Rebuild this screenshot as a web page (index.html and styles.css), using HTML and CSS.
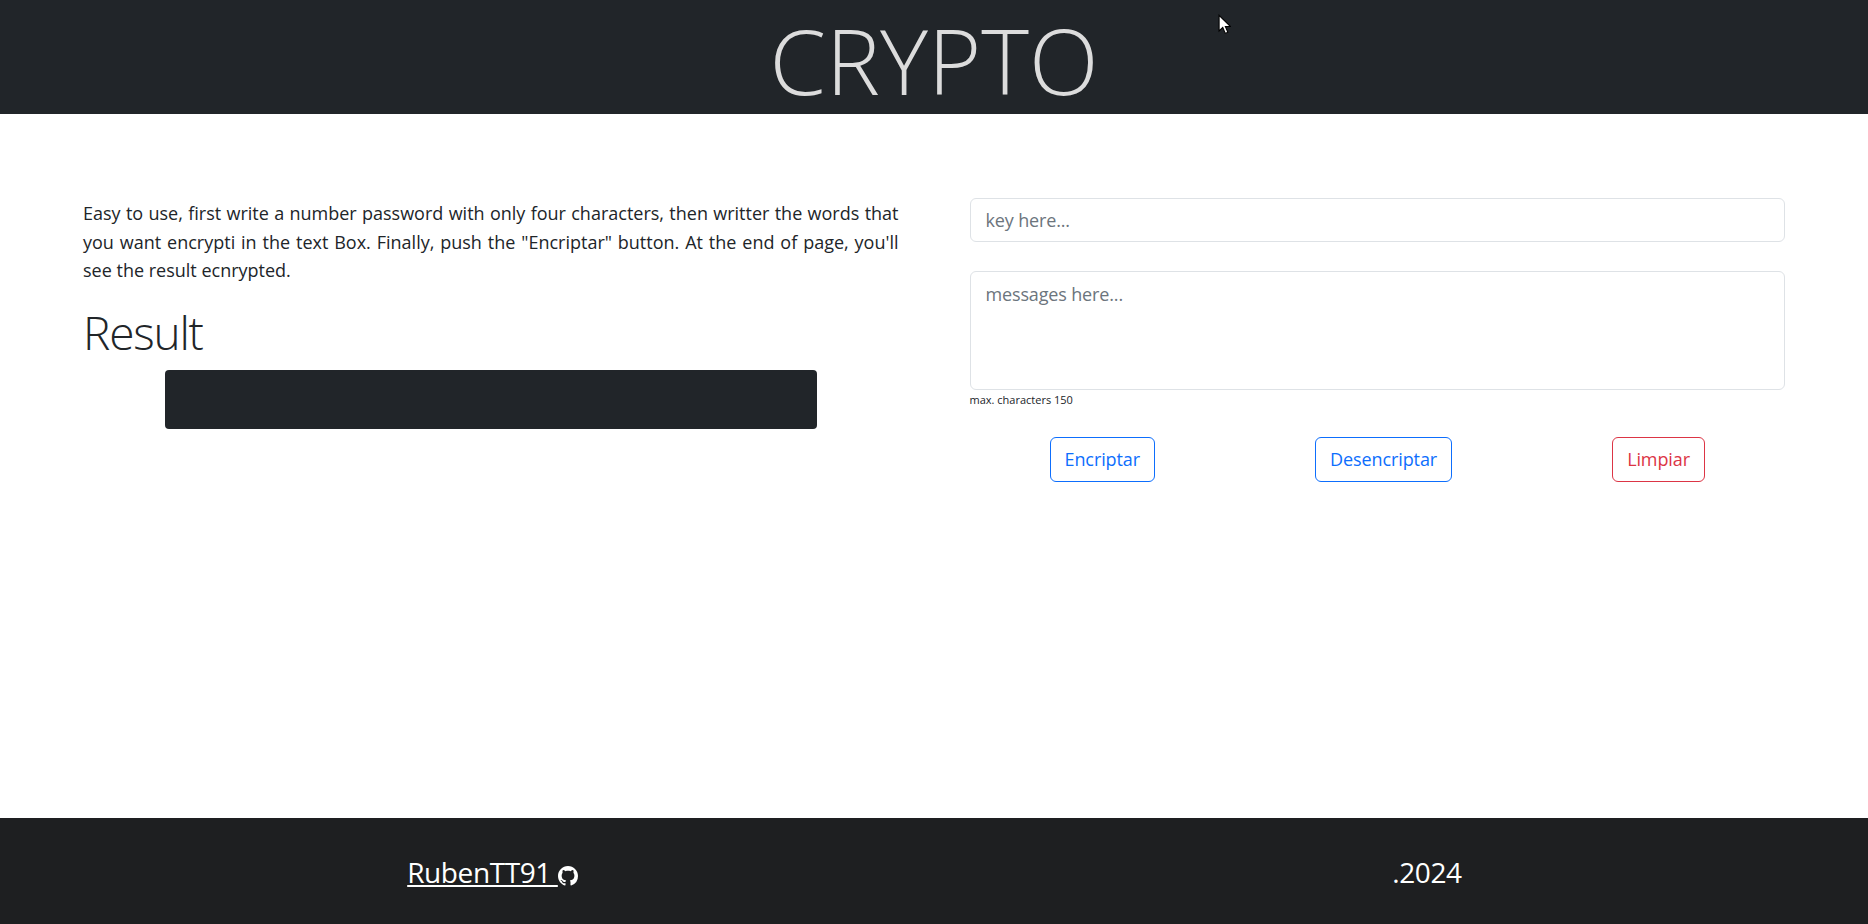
FILE: index.html
```html
<!DOCTYPE html>
<html lang="en">
<head>
<meta charset="utf-8">
<title>Crypto</title>
<link rel="stylesheet" href="styles.css">
</head>
<body>
<header class="top"><h1 class="brand">CRYPTO</h1></header>
<main class="main">
  <section class="col">
    <p class="intro">Easy to use, first write a number password with only four characters, then writter the words that you want encrypti in the text Box. Finally, push the "Encriptar" button. At the end of page, you'll see the result ecnrypted.</p>
    <h2 class="result-title">Result</h2>
    <div class="result-box"></div>
  </section>
  <section class="col">
    <input class="field" type="text" placeholder="key here...">
    <textarea class="field area" placeholder="messages here..."></textarea>
    <div class="hint">max. characters 150</div>
    <div class="actions">
      <button class="btn blue">Encriptar</button>
      <button class="btn blue">Desencriptar</button>
      <button class="btn red">Limpiar</button>
    </div>
  </section>
</main>
<footer class="foot">
  <div class="foot-cell"><a class="link" href="#">RubenTT91 <svg class="gh" viewBox="0 0 16 16" width="20" height="20" fill="currentColor"><path d="M8 0C3.58 0 0 3.58 0 8c0 3.54 2.29 6.53 5.47 7.59.4.07.55-.17.55-.38 0-.19-.01-.82-.01-1.49-2.01.37-2.53-.49-2.69-.94-.09-.23-.48-.94-.82-1.13-.28-.15-.68-.52-.01-.53.63-.01 1.08.58 1.23.82.72 1.21 1.87.87 2.33.66.07-.52.28-.87.51-1.07-1.78-.2-3.64-.89-3.64-3.95 0-.87.31-1.59.82-2.15-.08-.2-.36-1.02.08-2.12 0 0 .67-.21 2.2.82.64-.18 1.32-.27 2-.27s1.36.09 2 .27c1.53-1.04 2.2-.82 2.2-.82.44 1.1.16 1.92.08 2.12.51.56.82 1.27.82 2.15 0 3.07-1.87 3.75-3.65 3.95.29.25.54.73.54 1.48 0 1.07-.01 1.93-.01 2.2 0 .21.15.46.55.38A8.01 8.01 0 0 0 16 8c0-4.42-3.58-8-8-8z"/></svg></a></div>
  <div class="foot-cell year">.2024</div>
</footer>
<svg class="cursor" viewBox="0 0 12 19" width="13" height="21"><path d="M1 1v14.5l3.4-3.2 2.3 5.4 2.4-1-2.3-5.3h4.7z" fill="#fff" stroke="#000" stroke-width="1"/></svg>
</body>
</html>
```
FILE: styles.css
```css
* { box-sizing: border-box; }
html, body { height: 100%; }
body { margin: 0; min-height: 924px; display: flex; flex-direction: column; background: #fff; color: #212529; font-family: "Open Sans", "Noto Sans", sans-serif; font-size: 16px; line-height: 1.5; }
.top { height: 114px; background: #212529; display: flex; justify-content: center; }
.brand { margin: 0; padding-top: 6px; font-size: 91px; font-weight: 300; line-height: 108px; color: #dcdcdc; }
.main { flex: 1; display: grid; grid-template-columns: 1fr 1fr; gap: 71px; padding: 84px 83px 0; }
.intro { margin: 1px 0 18px; font-size: 18px; line-height: 28.5px; text-align: justify; }
.result-title { margin: 0 0 9px; font-size: 46px; font-weight: 300; line-height: 58px; letter-spacing: -1.2px; }
.result-box { width: 80%; height: 59px; margin: 0 auto; background: #212529; border-radius: 4px; }
.col { display: flex; flex-direction: column; }
.field { display: block; width: 100%; height: 44px; padding: 6px 15px; border: 1px solid #dee2e6; border-radius: 6px; font: inherit; font-size: 18px; letter-spacing: -0.15px; color: #212529; background: #fff; }
.field::placeholder { color: #6c757d; }
.area { height: 119px; margin-top: 29px; padding-top: 9px; resize: none; }
.hint { font-size: 11px; line-height: 18px; margin-top: 1px; }
.actions { display: flex; justify-content: space-around; margin-top: 28px; }
.btn { height: 45px; padding: 0 14px; background: #fff; border: 1px solid; border-radius: 6px; font: inherit; font-size: 18px; letter-spacing: -0.1px; }
.blue { color: #0d6efd; border-color: #0d6efd; }
.red { color: #dc3545; border-color: #dc3545; }
.foot { height: 106px; padding: 2px 0 0 25px; background: #1e1f21; color: #fff; display: grid; grid-template-columns: 935px 1fr; align-items: center; font-size: 28px; letter-spacing: -0.4px; }
.foot-cell { text-align: center; }
.year { padding-left: 26px; }
.link { color: #fff; }
.gh { vertical-align: -3px; }
.cursor { position: absolute; left: 1218px; top: 14px; }
```
